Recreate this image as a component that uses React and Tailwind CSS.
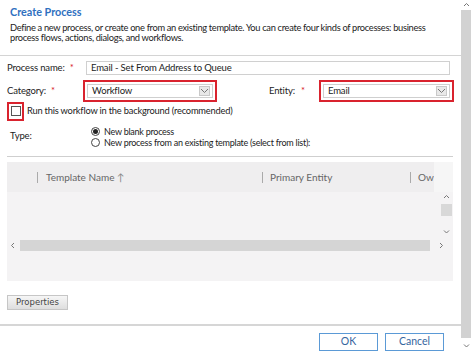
import React from "react";

const Chevron = () => (
  <svg width="9" height="6" viewBox="0 0 9 6" fill="none" stroke="#777" strokeWidth="1">
    <path d="M1 1l3.5 3.5L8 1" />
  </svg>
);

const SmallArrow = ({ dir }) => {
  const d = {
    up: "M1 4l2.5-2.5L6 4",
    down: "M1 1.5L3.5 4 6 1.5",
    left: "M4 1L1.5 3.5 4 6",
    right: "M2 1l2.5 2.5L2 6",
  }[dir];
  return (
    <svg width="7" height="7" viewBox="0 0 7 7" fill="none" stroke="#777" strokeWidth="1">
      <path d={d} />
    </svg>
  );
};

const Select = ({ value }) => (
  <div className="border-2 border-[#d9232e] p-[2px] flex">
    <div className="flex-1 h-[14px] border border-[#cfcfcf] bg-white flex items-center pl-[4px] pr-[2px]">
      <span className="flex-1 leading-none text-[#222]">{value}</span>
      <div className="w-[11px] h-[10px] bg-[#e8e8e8] border border-[#c9c9c9] flex items-center justify-center">
        <Chevron />
      </div>
    </div>
  </div>
);

export default function App() {
  return (
    <div className="w-[474px] h-[355px] bg-white flex overflow-hidden font-['Lato',sans-serif] text-[#222]">
      <div className="w-[461px] flex flex-col">
        {/* header */}
        <div className="h-[56px] border-b border-[#d4d4d4] pl-[10px] pt-[4px]">
          <div className="text-[10.8px] font-bold text-[#2f70bf] leading-[16px]">Create Process</div>
          <div className="text-[9.3px] leading-[10px] text-[#222] mt-[3px] whitespace-nowrap tracking-[-0.32px]">
            Define a new process, or create one from an existing template. You can create four kinds of processes: business
            <br />
            process flows, actions, dialogs, and workflows.
          </div>
        </div>

        {/* form */}
        <div className="pl-[7px] pr-[7px] pt-[5px] flex flex-col text-[9.5px] tracking-[-0.15px] leading-none whitespace-nowrap">
          <div className="flex items-center h-[14px]">
            <div className="w-[79px] flex">
              <span>Process name:</span>
              <span className="text-[#d9232e] ml-[5px]">*</span>
            </div>
            <div className="w-[364px] h-[14px] border border-[#d0d0d0] flex items-center pl-[4px] text-[9.5px]">
              Email - Set From Address to Queue
            </div>
          </div>

          <div className="flex items-center h-[21px] mt-[5px]">
            <div className="w-[76px] flex">
              <span>Category:</span>
              <span className="text-[#d9232e] ml-[5px]">*</span>
            </div>
            <div className="w-[134px]">
              <Select value="Workflow" />
            </div>
            <div className="ml-[52px] w-[50px] flex">
              <span>Entity:</span>
              <span className="text-[#d9232e] ml-[6px]">*</span>
            </div>
            <div className="w-[135px]">
              <Select value="Email" />
            </div>
          </div>

          <div className="flex items-center h-[20px] mt-[0px]">
            <div className="w-[17px] h-[19px] border-2 border-[#d9232e] flex items-center justify-center">
              <div className="w-[10px] h-[10px] border border-[#555] bg-white" />
            </div>
            <span className="ml-[3px] text-[9.3px] tracking-[-0.2px]">Run this workflow in the background (recommended)</span>
          </div>

          <div className="flex mt-[5px] h-[22px]">
            <span className="w-[84px] pl-[3px] pt-[5px]">Type:</span>
            <div className="flex flex-col gap-[1px] text-[9px] tracking-[-0.25px]">
              <div className="flex items-center gap-[4px] h-[11px]">
                <div className="w-[9px] h-[9px] rounded-full border border-[#444] flex items-center justify-center">
                  <div className="w-[5px] h-[5px] rounded-full bg-[#222]" />
                </div>
                <span>New blank process</span>
              </div>
              <div className="flex items-center gap-[4px] h-[11px]">
                <div className="w-[9px] h-[9px] rounded-full border border-[#444]" />
                <span>New process from an existing template (select from list):</span>
              </div>
            </div>
          </div>

          <div className="border-b border-[#cfcfcf] w-[446px] mt-[8px]" />

          {/* grid */}
          <div className="w-[446px] h-[119px] mt-[5px] bg-[#f4f3f4] flex flex-col">
            <div className="h-[30px] bg-[#efeeef] flex items-center text-[10px] text-[#666] tracking-normal">
              <span className="ml-[30px] w-[1px] h-[11px] bg-[#aaa]" />
              <span className="ml-[8px] w-[216px]">Template Name <span className="text-[#888]">↑</span></span>
              <span className="w-[1px] h-[11px] bg-[#aaa]" />
              <span className="ml-[7px] w-[140px]">Primary Entity</span>
              <span className="w-[1px] h-[11px] bg-[#aaa]" />
              <span className="ml-[7px] w-[16px]">Ow</span>
              <div className="flex-1 h-full bg-[#f6f6f6]" />
            </div>
            <div className="flex h-[47px]">
              <div className="flex-1" />
              <div className="w-[13px] flex flex-col items-center">
                <div className="h-[9px] flex items-end"><SmallArrow dir="up" /></div>
                <div className="w-[11px] h-[12px] bg-[#d8d8d8] mt-[3px]" />
                <div className="flex-1" />
                <div className="h-[10px] flex items-start"><SmallArrow dir="down" /></div>
              </div>
            </div>
            <div className="flex items-center h-[12px]">
              <div className="w-[13px] flex justify-center"><SmallArrow dir="left" /></div>
              <div className="w-[410px] h-[11px] bg-[#d5d5d5]" />
              <div className="w-[23px] flex justify-center"><SmallArrow dir="right" /></div>
            </div>
          </div>

          <div className="mt-[14px] w-[61px] h-[15px] border border-[#c6c6c6] bg-gradient-to-b from-[#f6f6f6] to-[#dedede] flex items-center justify-center text-[8.5px] tracking-normal text-[#444] font-['DejaVu_Sans',sans-serif]">
            Properties
          </div>
        </div>

        <div className="mt-[14px] border-b-2 border-[#d6d6d6]" />

        <div className="flex justify-end gap-[7px] pr-[17px] mt-[7px]">
          <div className="w-[59px] h-[18px] border border-[#5b9ad6] flex items-center justify-center text-[10.5px] text-[#35659e]">OK</div>
          <div className="w-[59px] h-[18px] border border-[#5b9ad6] flex items-center justify-center text-[10.5px] text-[#35659e]">Cancel</div>
        </div>
      </div>

      {/* page scrollbar */}
      <div className="w-[13px] flex flex-col">
        <div className="h-[10px] flex items-center justify-center pr-[3px]"><SmallArrow dir="up" /></div>
        <div className="w-[10px] flex-1 bg-[#d2d2d2]" />
        <div className="h-[17px] flex items-center justify-center pr-[3px]"><SmallArrow dir="down" /></div>
      </div>
    </div>
  );
}
